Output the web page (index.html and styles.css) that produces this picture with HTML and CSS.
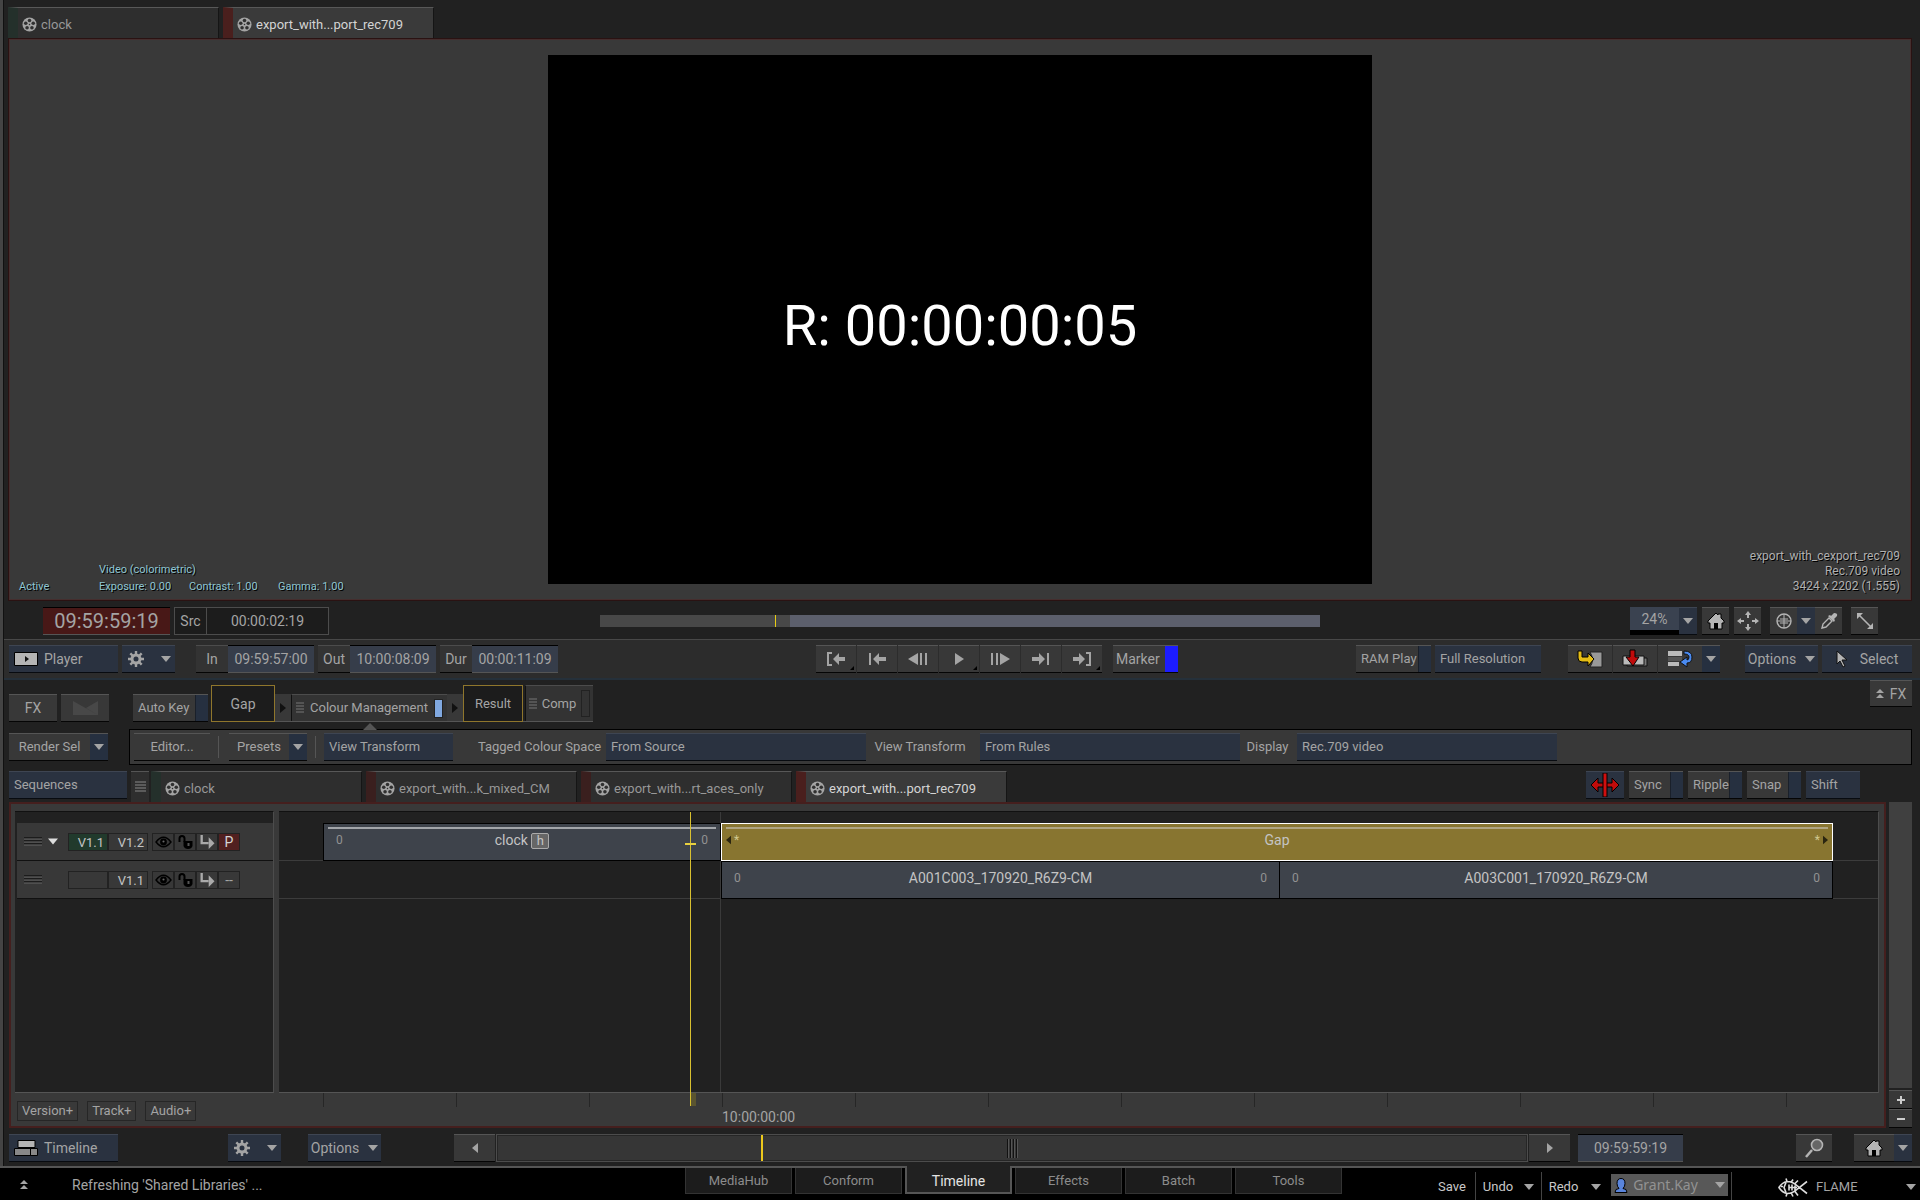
FILE: index.html
```
<!DOCTYPE html>
<html lang="en">
<head>
    <meta charset="UTF-8">
    <title>Flame - Timeline</title>
    <link rel="stylesheet" href="styles.css">
</head>
<body>
<svg class="defs" width="0" height="0" aria-hidden="true">
    <symbol id="reel" viewBox="0 0 16 16">
        <circle cx="8" cy="8" r="7.500" fill="currentColor"/>
        <g fill="#303030">
            <circle cx="8" cy="3.700" r="1.900"/><circle cx="12" cy="6.600" r="1.900"/><circle cx="10.600" cy="11.400" r="1.900"/>
            <circle cx="5.400" cy="11.400" r="1.900"/><circle cx="4" cy="6.600" r="1.900"/><circle cx="8" cy="8" r=".8"/>
        </g>
    </symbol>
    <symbol id="down" viewBox="0 0 10 6"><path d="M0 0h10L5 6z" fill="currentColor"/></symbol>
    <symbol id="right" viewBox="0 0 6 10"><path d="M0 0v10l6-5z" fill="currentColor"/></symbol>
    <symbol id="left" viewBox="0 0 6 10"><path d="M6 0v10L0 5z" fill="currentColor"/></symbol>
    <symbol id="up2" viewBox="0 0 8 10"><path d="M4 0l4 4H0zM4 5l4 4H0z" fill="currentColor"/></symbol>
    <symbol id="gear" viewBox="0 0 18 18">
        <circle cx="9" cy="9" r="4" fill="none" stroke="currentColor" stroke-width="3"/>
        <path d="M9 1v3M9 14v3M1 9h3M14 9h3M3.3 3.3l2.2 2.2M12.5 12.5l2.2 2.2M3.3 14.7l2.2-2.2M12.5 5.5l2.2-2.2" stroke="currentColor" stroke-width="2.4"/>
    </symbol>
    <symbol id="house" viewBox="0 0 18 18">
        <path d="M9 1L1 9v2h2v6h12v-6h2V9l-3-3V2h-3v1z" fill="#b4b4b4" stroke="#000"/>
        <path d="M7 17v-6h4v6z" fill="#000"/>
    </symbol>
    <symbol id="eye" viewBox="0 0 16 12">
        <path d="M1 6q7-9 14 0q-7 9-14 0z" fill="none" stroke="#000" stroke-width="1.4"/>
        <circle cx="8" cy="6" r="3.2" fill="#000"/><circle cx="8" cy="5.5" r="1" fill="#666"/>
    </symbol>
    <symbol id="lock" viewBox="0 0 16 14">
        <path d="M2 7V3.500q0-2.500 2.500-2.500T7 3.500V7" fill="none" stroke="#000" stroke-width="2"/>
        <path d="M6 6h9v5q-1 3-4.500 3T6 11z" fill="#000"/><path d="M10 8h2v3h-2z" fill="#555"/>
    </symbol>
    <symbol id="turn" viewBox="0 0 14 12">
        <path d="M2 0v7h6" fill="none" stroke="#aaa" stroke-width="2"/><path d="M8 2v10l5-5z" fill="#aaa"/>
    </symbol>
    <symbol id="grip" viewBox="0 0 18 10">
        <path d="M0 1h18M0 4h18M0 7h18" stroke="#000"/><path d="M0 2h18M0 5h18M0 8h18" stroke="#666"/>
    </symbol>
</svg>

<main class="work">
    <nav class="tabs viewer-tabs">
        <button class="tab green"><svg class="reel"><use href="#reel"/></svg>clock</button>
        <button class="tab red active"><svg class="reel"><use href="#reel"/></svg>export_with...port_rec709</button>
    </nav>

    <section class="viewer">
        <div class="frame">R: 00:00:00:05</div>
        <div class="overlay info">
            <span class="state">Active</span>
            <span class="mode">Video (colorimetric)</span>
            <span class="exposure">Exposure: 0.00</span>
            <span class="contrast">Contrast: 1.00</span>
            <span class="gamma">Gamma: 1.00</span>
        </div>
        <div class="overlay meta">export_with_cexport_rec709<br>Rec.709 video<br>3424 x 2202 (1.555)</div>
    </section>

    <div class="scrub">
        <input class="timecode" aria-label="Current time" value="09:59:59:19">
        <label class="src" for="src">Src</label>
        <input class="src-time" id="src" value="00:00:02:19">
        <div class="scrub-bar"><i class="scrub-cache"></i><i class="scrub-mark"></i></div>
        <div class="view-tools">
            <div class="zoom"><input aria-label="Zoom" value="24%"></div>
            <button class="drop" aria-label="Zoom list"><svg><use href="#down"/></svg></button>
            <button class="btn tool" aria-label="Home"><svg class="i18"><use href="#house"/></svg></button>
            <button class="btn tool" aria-label="Pan">
                <svg class="i20" viewBox="0 0 22 20"><path d="M11 0l3 4h-2v3h-2V4H8zM11 20l3-4h-2v-3h-2v3H8zM0 10l4-3v2h3v2H4v2zM22 10l-4-3v2h-3v2h3v2z" fill="#b4b4b4"/></svg>
            </button>
            <button class="btn tool grid-btn" aria-label="Grid">
                <svg class="i18" viewBox="0 0 18 18"><circle cx="9" cy="9" r="7" fill="none" stroke="#b4b4b4" stroke-width="1.4"/><path d="M9 2v14M2 9h14M5 7h8M5 11h8" stroke="#b4b4b4"/></svg>
            </button>
            <button class="drop" aria-label="Grid list"><svg><use href="#down"/></svg></button>
            <button class="btn tool pick" aria-label="Colour picker">
                <svg class="i18" viewBox="0 0 18 18"><path d="M2 16l1-4 6-6 3 3-6 6z" fill="#333" stroke="#b4b4b4" stroke-width="1.4"/><path d="M8 4l6 6 1-2-1-1 3-3q1-3-3-3l-3 3-1-1z" fill="#b4b4b4"/></svg>
            </button>
            <button class="btn tool full" aria-label="Full screen">
                <svg class="i18" viewBox="0 0 18 18"><path d="M3 3l12 12" stroke="#b4b4b4" stroke-width="1.6"/><path d="M1 1h6L1 7zM17 17h-6l6-6z" fill="#b4b4b4"/></svg>
            </button>
        </div>
    </div>

    <div class="player">
        <button class="blue mode-btn">
            <svg class="mode-icon" viewBox="0 0 24 14"><path d="M.5.5h23v13H.5z" fill="#b4b4b4" stroke="#000"/><path d="M11 4v6l4-3z" fill="#111"/></svg>Player
        </button>
        <button class="blue gear-btn" aria-label="Player settings"><svg class="i18"><use href="#gear"/></svg><svg class="arrow"><use href="#down"/></svg></button>
        <div class="field in"><label for="in">In</label><input id="in" value="09:59:57:00"></div>
        <div class="field"><label for="out">Out</label><input id="out" value="10:00:08:09"></div>
        <div class="field"><label for="dur">Dur</label><input id="dur" value="00:00:11:09"></div>
        <div class="transport">
            <button class="more" aria-label="To in"><svg viewBox="0 0 20 14"><path d="M6 1H2v12h4" fill="none" stroke="currentColor" stroke-width="2"/><path d="M7 7l6-6v4h6v4h-6v4z" fill="currentColor"/></svg></button>
            <button aria-label="Previous edit"><svg viewBox="0 0 20 14"><path d="M2 1h2v12H2zM6 7l6-6v4h7v4h-7v4z" fill="currentColor"/></svg></button>
            <button aria-label="Step back"><svg viewBox="0 0 20 14"><path d="M10 1v12L0 7zM12 1h2v12h-2zM17 1h2v12h-2z" fill="currentColor"/></svg></button>
            <button class="more" aria-label="Play"><svg viewBox="0 0 20 14"><path d="M6 1v12l9-6z" fill="currentColor"/></svg></button>
            <button aria-label="Step forward"><svg viewBox="0 0 20 14"><path d="M10 1v12l10-6zM6 1h2v12H6zM1 1h2v12H1z" fill="currentColor"/></svg></button>
            <button aria-label="Next edit"><svg viewBox="0 0 20 14"><path d="M16 1h2v12h-2zM14 7L8 1v4H1v4h7v4z" fill="currentColor"/></svg></button>
            <button class="more" aria-label="To out"><svg viewBox="0 0 20 14"><path d="M14 1h4v12h-4" fill="none" stroke="currentColor" stroke-width="2"/><path d="M13 7L7 1v4H1v4h6v4z" fill="currentColor"/></svg></button>
        </div>
        <button class="marker">Marker<i></i></button>
        <div class="player-right">
            <label class="toggle ram">RAM Play<input type="checkbox"></label>
            <select class="blue res" aria-label="Resolution"><option>Full Resolution</option></select>
            <div class="edit-tools">
                <button aria-label="Insert"><svg viewBox="0 0 26 18"><path d="M13 2h12v15H13q5-7 0-15z" fill="#999" stroke="#222"/><path d="M1 1h4v6h6V3l6 6-6 7v-4H5q-4 0-4-4z" fill="#e5bd15" stroke="#000"/></svg></button>
                <button aria-label="Overwrite"><svg viewBox="0 0 26 18"><path d="M5 8h20v8H5z" fill="#777" stroke="#111"/><path d="M1 6h21v9H1z" fill="#bbb" stroke="#111"/><path d="M8 0h5v7h4l-6 9-7-9h4z" fill="#c00b0b" stroke="#000"/></svg></button>
                <button aria-label="Replace"><svg viewBox="0 0 26 18"><path d="M1 1h14v5H1z" fill="#bbb"/><path d="M1 7h14v4H1z" fill="#555"/><path d="M1 12h11v4H1z" fill="#bbb"/><path d="M17 1q8 0 8 6t-5 6v4l-7-5 7-5v3q2 0 2-3t-5-3z" fill="#4a8af0" stroke="#111"/></svg></button>
                <button class="drop" aria-label="Edit list"><svg><use href="#down"/></svg></button>
            </div>
            <button class="blue options">Options<svg class="arrow"><use href="#down"/></svg></button>
            <button class="blue select"><svg class="i18" viewBox="0 0 14 18"><path d="M3 1v13l3-3 3 6 2-1-3-6h5z" fill="#b4b4b4" stroke="#111"/></svg>Select</button>
        </div>
    </div>

    <div class="fx-row">
        <button class="btn fx">FX</button>
        <button class="btn fx" aria-label="Transition"><svg class="trans" viewBox="0 0 25 14"><path d="M0 0l25 14H0zM25 0v14L13 7z" fill="#484848"/></svg></button>
        <label class="toggle auto">Auto Key<input type="checkbox"></label>
        <div class="pipeline">
            <button class="node gap-node">Gap</button>
            <span class="link"><svg><use href="#right"/></svg></span>
            <button class="stage cm"><svg class="lines" viewBox="0 0 8 12"><path d="M0 1h8M0 4h8M0 7h8M0 10h8" stroke="#777"/></svg>Colour Management<i class="on"></i></button>
            <span class="link"><svg><use href="#right"/></svg></span>
            <button class="node result-node">Result</button>
            <button class="stage comp"><svg class="lines" viewBox="0 0 8 12"><path d="M0 1h8M0 4h8M0 7h8M0 10h8" stroke="#777"/></svg>Comp<i></i></button>
        </div>
        <button class="btn fx-toggle"><svg><use href="#up2"/></svg>FX</button>
    </div>

    <div class="params-row">
        <button class="split render"><span>Render Sel</span><i><svg><use href="#down"/></svg></i></button>
        <div class="params">
            <button class="btn editor">Editor...</button>
            <hr>
            <button class="split presets"><span>Presets</span><i><svg><use href="#down"/></svg></i></button>
            <hr>
            <select class="blue transform" aria-label="Mode"><option>View Transform</option></select>
            <label class="tagged" for="tagged">Tagged Colour Space</label>
            <select class="blue wide" id="tagged"><option>From Source</option></select>
            <label class="vt" for="vt">View Transform</label>
            <select class="blue wide" id="vt"><option>From Rules</option></select>
            <label class="display" for="display">Display</label>
            <select class="blue wide" id="display"><option>Rec.709 video</option></select>
        </div>
    </div>

    <div class="seq-row">
        <select class="blue sequences" aria-label="List"><option>Sequences</option></select>
        <span class="handle"><svg viewBox="0 0 11 12"><path d="M0 1h11M0 4h11M0 7h11M0 10h11" stroke="#888"/></svg></span>
        <nav class="tabs">
            <button class="tab green"><svg class="reel"><use href="#reel"/></svg>clock</button>
            <button class="tab red"><svg class="reel"><use href="#reel"/></svg>export_with...k_mixed_CM</button>
            <button class="tab red"><svg class="reel"><use href="#reel"/></svg>export_with...rt_aces_only</button>
            <button class="tab red active"><svg class="reel"><use href="#reel"/></svg>export_with...port_rec709</button>
        </nav>
        <div class="seq-tools">
            <button class="blue trim" aria-label="Trim"><svg viewBox="0 0 30 24"><path d="M1 12l7-7v5h14V5l7 7-7 7v-5H8v5z" fill="#c00b0b" stroke="#000"/><path d="M13 0h4v24h-4z" fill="#d00f0f" stroke="#000"/></svg></button>
            <label class="toggle">Sync<input type="checkbox"></label>
            <label class="toggle">Ripple<input type="checkbox"></label>
            <label class="toggle">Snap<input type="checkbox"></label>
            <button class="blue shift">Shift</button>
        </div>
    </div>

    <section class="timeline">
        <div class="panel">
            <div class="heads">
                <div class="head">
                    <svg class="grip"><use href="#grip"/></svg>
                    <svg class="fold"><use href="#down"/></svg>
                    <span class="name green">V1.1</span><span class="name">V1.2</span>
                    <button class="first" aria-label="Show"><svg><use href="#eye"/></svg></button>
                    <button aria-label="Lock"><svg><use href="#lock"/></svg></button>
                    <button aria-label="Patch"><svg><use href="#turn"/></svg></button>
                    <button class="primary">P</button>
                </div>
                <div class="head">
                    <svg class="grip"><use href="#grip"/></svg>
                    <span class="fold"></span>
                    <span class="name"></span><span class="name">V1.1</span>
                    <button class="first" aria-label="Show"><svg><use href="#eye"/></svg></button>
                    <button aria-label="Lock"><svg><use href="#lock"/></svg></button>
                    <button aria-label="Patch"><svg><use href="#turn"/></svg></button>
                    <button>--</button>
                </div>
            </div>
            <div class="tracks">
                <i class="hour"></i>
                <div class="track">
                    <div class="clip clip-clock barred"><small>0</small><span>clock <kbd>h</kbd></span><small>0</small></div>
                    <div class="clip clip-gap barred"><small><svg><use href="#left"/></svg>*</small><span>Gap</span><small>*<svg><use href="#right"/></svg></small></div>
                </div>
                <div class="track">
                    <div class="clip clip-a"><small>0</small><span>A001C003_170920_R6Z9-CM</span><small>0</small></div>
                    <div class="clip clip-b"><small>0</small><span>A003C001_170920_R6Z9-CM</span><small>0</small></div>
                </div>
                <i class="playhead"></i>
            </div>
            <div class="add">
                <button>Version+</button><button>Track+</button><button>Audio+</button>
            </div>
            <div class="ruler">
                <i></i><i></i><i></i><i></i><i></i><i></i><i></i><i></i><i></i><i></i><i></i><i></i>
                <span>10:00:00:00</span>
            </div>
        </div>
        <div class="vscroll">
            <div class="vbar"></div>
            <button aria-label="Taller tracks"><svg viewBox="0 0 10 10"><path d="M1 5h8M5 1v8" stroke="#ccc" stroke-width="2"/></svg></button>
            <button aria-label="Shorter tracks"><svg viewBox="0 0 10 10"><path d="M1 5h8" stroke="#ccc" stroke-width="2"/></svg></button>
        </div>
    </section>

    <div class="nav-row">
        <button class="blue mode-btn">
            <svg class="mode-icon" viewBox="0 0 24 16"><path d="M4 .5h17v7H4z" fill="#b4b4b4" stroke="#000"/><path d="M.5 8.500h16v7H.5zM16.500 8.500h7v7h-7z" fill="#888" stroke="#000"/></svg>Timeline
        </button>
        <button class="blue gear-btn" aria-label="Timeline settings"><svg class="i18"><use href="#gear"/></svg><svg class="arrow"><use href="#down"/></svg></button>
        <button class="blue options">Options<svg class="arrow"><use href="#down"/></svg></button>
        <div class="hscroll">
            <button class="btn" aria-label="Scroll left"><svg><use href="#left"/></svg></button>
            <div class="hbar"><i class="hmark"></i><i class="hgrip"></i></div>
            <button class="btn" aria-label="Scroll right"><svg><use href="#right"/></svg></button>
        </div>
        <input class="nav-time" aria-label="Position" value="09:59:59:19">
        <button class="btn mag" aria-label="Zoom"><svg class="i20" viewBox="0 0 20 20"><path d="M8 12l-6 7" stroke="#b4b4b4" stroke-width="2.500"/><circle cx="13" cy="7" r="5.500" fill="#666" stroke="#b4b4b4" stroke-width="1.600"/></svg></button>
        <button class="btn nav-home" aria-label="Home"><svg class="i18"><use href="#house"/></svg></button>
        <button class="drop" aria-label="Home list"><svg><use href="#down"/></svg></button>
    </div>
</main>

<footer class="bar">
    <button class="expand" aria-label="Expand"><svg><use href="#up2"/></svg></button>
    <span class="status">Refreshing 'Shared Libraries' ...</span>
    <nav class="modules">
        <button>MediaHub</button>
        <button>Conform</button>
        <button class="active">Timeline</button>
        <button>Effects</button>
        <button>Batch</button>
        <button>Tools</button>
    </nav>
    <div class="session">
        <button class="save">Save</button>
        <button class="undo">Undo<svg><use href="#down"/></svg></button>
        <button class="redo">Redo<svg><use href="#down"/></svg></button>
        <button class="user"><svg class="person" viewBox="0 0 14 16"><path d="M1 15q0-4 4-4-2-2-2-5 0-5 4-5t4 5q0 3-2 5 4 0 4 4z" fill="#5a85dc" stroke="#000"/></svg>Grant.Kay<svg><use href="#down"/></svg></button>
        <button class="flame">
            <svg class="fish" viewBox="0 0 30 18" fill="none" stroke="#ddd" stroke-width="1.600"><path d="M29 3L20 10q-5 5-11 5-5-1-8-6 3-5 8-6 6 0 11 5l9 7M8 4l-2 5 2 5M11 6v6M14 6v6M17 7v5M11 9h8M9 3L8 0M13 4l2-3M17 5l3-3M9 15l-1 3M13 14l2 4M17 13l3 4M3 8h2"/></svg>
            FLAME<svg><use href="#down"/></svg>
        </button>
    </div>
</footer>
</body>
</html>
```
FILE: styles.css
```
* {
    box-sizing: border-box;
}

body {
    margin: 0;
    min-height: 100vh;
    display: flex;
    flex-direction: column;
    background: #212121;
    color: #a4a4a4;
    font: 14px/20px "Roboto", "Liberation Sans", sans-serif;
}

button, input, select {
    margin: 0;
    padding: 0;
    border: 0;
    border-radius: 0;
    background: none;
    color: inherit;
    font: inherit;
    outline: none;
    appearance: none;
    flex: none;
}

button, label {
    display: flex;
    align-items: center;
    justify-content: center;
    white-space: nowrap;
    cursor: pointer;
}

svg {
    flex: none;
    width: 10px;
    height: 6px;
}

.defs {
    position: absolute;
}

.i18 {
    width: 18px;
    height: 18px;
}

.i20 {
    width: 22px;
    height: 20px;
}

.work {
    flex: 1;
    display: flex;
    flex-direction: column;
    padding: 7px 8px 4px;
    background: linear-gradient(90deg, #444 3px, #111 3px, #111 4px, transparent 4px);
}

/* buttons */

.btn, .toggle, .split, .marker, .transport button, .edit-tools button, .vscroll button {
    height: 28px;
    background: #383838;
    border-top: 1px solid #555;
    border-bottom: 1px solid #050505;
}

.blue, .drop {
    height: 28px;
    background: #2a3240;
    border-top: 1px solid #3e4552;
    border-bottom: 1px solid #080b10;
    padding: 0;
}

select.blue {
    padding: 0 5px;
}

.drop {
    width: 18px;
}

.toggle {
    justify-content: space-between;
    padding-left: 5px;
}

.toggle input {
    width: 13px;
    height: 100%;
    background: #263040;
    border-left: 1px solid #1a202a;
}

.split span {
    flex: 1;
    text-align: center;
}

.split i {
    width: 18px;
    height: 100%;
    display: flex;
    align-items: center;
    justify-content: center;
    background: #263040;
}

.options {
    width: 73px;
    gap: 9px;
}

.gear-btn {
    width: 53px;
    gap: 16px;
}

.mode-btn {
    width: 109px;
    justify-content: flex-start;
    padding-left: 5px;
    gap: 6px;
}

.mode-icon {
    width: 24px;
    height: 16px;
}

/* tabs */

.tabs {
    display: flex;
    gap: 4px;
}

.tab {
    width: 211px;
    height: 31px;
    justify-content: flex-start;
    gap: 4px;
    padding: 3px 0 0 4px;
    background: #2e2e2e;
    border-top: 1px solid #585858;
    border-left: 10px solid #24302b;
    border-right: 1px solid #151515;
    color: #989898;
    font-size: 13px;
}

.tab.red {
    border-left-color: #3a1f1e;
}

.tab.active {
    background: #3a3a3a;
    border-left-color: #4a1f1d;
    color: #d4d4d4;
}

.reel {
    width: 15px;
    height: 15px;
    color: #a4a4a4;
}

/* viewer */

.viewer {
    flex: 528 1 0;
    position: relative;
    display: flex;
    justify-content: center;
    padding: 16px;
    background: #393939;
    border: 1px solid #2a1212;
    box-shadow: inset 0 0 0 1px #452e2e;
}

.frame {
    aspect-ratio: 822 / 528;
    display: flex;
    align-items: center;
    justify-content: center;
    background: #000;
    color: #fff;
    font-size: 56px;
    line-height: 60px;
    padding-top: 12px;
}

.overlay {
    position: absolute;
    bottom: 6px;
    font-size: 12px;
    line-height: 15px;
    text-shadow: 1px 1px 0 #000;
}

.info {
    left: 10px;
    display: grid;
    grid-template-columns: 80px 90px 89px auto;
    row-gap: 2px;
    color: #8fc6d2;
    font-size: 11px;
}

.state {
    grid-row: 2;
}

.mode {
    grid-column: 2 / span 3;
}

.meta {
    right: 11px;
    text-align: right;
    color: #b0b0b0;
}

/* scrub row */

.scrub {
    display: flex;
    align-items: center;
    height: 38px;
    padding: 2px 34px 0 35px;
}

.timecode {
    width: 127px;
    height: 28px;
    background: #481817;
    border-top: 1px solid #000;
    border-bottom: 1px solid #555;
    text-align: center;
    font-size: 20px;
}

.src, .src-time {
    height: 28px;
    border: 1px solid #4c4c4c;
    background: #1c1c1c;
}

.src {
    width: 33px;
    margin-left: 4px;
}

.src-time {
    width: 122px;
    border-left: 0;
    text-align: center;
}

.scrub-bar {
    position: relative;
    display: flex;
    justify-content: flex-end;
    width: 720px;
    height: 12px;
    margin-left: 271px;
    background: #484848;
}

.scrub-cache {
    width: 73.6%;
    background: #5c5f6c;
}

.scrub-mark {
    position: absolute;
    left: 24.3%;
    width: 1px;
    height: 12px;
    background: #e8cc14;
}

.view-tools {
    display: flex;
    margin-left: auto;
}

.zoom {
    width: 49px;
    height: 28px;
    border-bottom: 5px solid #000;
    background: #3a4250;
}

.zoom input {
    width: 100%;
    height: 23px;
    text-align: center;
}

.tool {
    width: 27px;
    margin-left: 5px;
}

.tool.grid-btn {
    margin-left: 9px;
}

.tool.pick {
    margin-left: 0;
}

.tool.full {
    margin-left: 9px;
}

/* player row */

.player {
    display: flex;
    align-items: center;
    height: 41px;
    margin: 0 -8px 0 -4px;
    padding: 0 8px 0 5px;
    background: #2c2c2c;
    border-top: 1px solid #484848;
    border-bottom: 2px solid #25303a;
}

.player .gear-btn {
    margin-left: 4px;
}

.field {
    display: flex;
    margin-left: 4px;
}

.field.in {
    margin-left: 21px;
}

.field label {
    width: 32px;
    height: 28px;
    background: #333;
    border-top: 1px solid #4c4c4c;
    border-bottom: 1px solid #050505;
}

.field input, .nav-time {
    width: 86px;
    height: 28px;
    background: #363d4a;
    border-top: 1px solid #000;
    border-bottom: 1px solid #555;
    text-align: center;
}

.transport {
    display: flex;
    gap: 1px;
    margin-left: 258px;
}

.transport button {
    width: 40px;
    position: relative;
}

.transport svg {
    width: 20px;
    height: 14px;
}

.transport .more::after {
    content: "";
    position: absolute;
    right: 2px;
    bottom: 2px;
    border: 2px solid #000;
    border-top-color: transparent;
    border-left-color: transparent;
}

.marker {
    width: 65px;
    margin-left: 11px;
    justify-content: space-between;
    padding-left: 3px;
}

.marker i {
    width: 13px;
    height: 100%;
    background: #1c1cff;
}

.player-right {
    display: flex;
    margin-left: auto;
}

.ram, .auto, .seq-tools, .render, .cm {
    font-size: 13px;
}

.ram {
    width: 75px;
}

.res {
    width: 106px;
    margin: 0 27px 0 4px;
    font-size: 13px;
}

.edit-tools {
    display: flex;
    gap: 1px;
    margin-right: 25px;
}

.edit-tools button {
    width: 44px;
}

.edit-tools button svg {
    width: 26px;
    height: 20px;
}

.edit-tools .drop {
    width: 18px;
    margin-left: -1px;
    background: #263040;
}

.edit-tools .drop svg {
    width: 10px;
    height: 6px;
}

.select {
    width: 90px;
    margin-left: 4px;
    padding-right: 4px;
    gap: 10px;
}

/* effects row */

.fx-row {
    display: flex;
    align-items: flex-end;
    height: 42px;
    padding-left: 1px;
}

.fx {
    width: 48px;
    margin-right: 4px;
}

.trans {
    width: 25px;
    height: 14px;
}

.auto {
    width: 75px;
    margin: 0 3px 0 20px;
}

.pipeline {
    display: flex;
    align-items: flex-end;
    border-bottom: 1px solid #555;
}

.node {
    height: 37px;
    margin-bottom: -1px;
    background: #1c1c1c;
    border: 1px solid #8f762c;
}

.gap-node {
    width: 64px;
}

.result-node {
    width: 60px;
    font-size: 13px;
}

.link {
    width: 16px;
    height: 27px;
    display: flex;
    align-items: center;
    justify-content: center;
    background: #383838;
    color: #111;
}

.link svg {
    width: 6px;
    height: 10px;
}

.stage {
    gap: 6px;
    background: #333;
    border-top: 1px solid #4c4c4c;
    border-left: 1px solid #111;
}

.lines {
    width: 8px;
    height: 12px;
}

.cm {
    width: 156px;
    height: 27px;
    position: relative;
}

/* points at the stage whose settings are open */
.cm::after {
    content: "";
    position: absolute;
    top: 28px;
    left: 71px;
    border: 7px solid transparent;
    border-top: 0;
    border-bottom-color: #555;
}

.comp {
    width: 68px;
    height: 36px;
    margin-left: 2px;
    gap: 5px;
    font-size: 13px;
}

.stage i {
    width: 9px;
    height: 27px;
    border: 1px solid #222;
}

.stage .on {
    height: 19px;
    background: #80a8e0;
}

.fx-toggle {
    align-self: flex-start;
    width: 42px;
    height: 27px;
    margin-left: auto;
    gap: 6px;
}

.fx-toggle svg, .expand svg {
    width: 8px;
    height: 10px;
}

/* parameters row */

.params-row {
    display: flex;
    align-items: center;
    height: 49px;
    padding: 0 0 0 1px;
}

.render {
    width: 99px;
}

.params {
    flex: 1;
    display: flex;
    align-items: center;
    height: 36px;
    margin-left: 21px;
    padding: 0 4px;
    background: #383838;
    border: 1px solid #000;
    font-size: 13px;
}

.params hr {
    width: 1px;
    height: 22px;
    margin: 0 8px;
    border: 0;
    background: #555;
}

.editor {
    width: 76px;
}

.presets {
    width: 78px;
    margin-left: 2px;
}

.transform {
    width: 129px;
}

.params .wide {
    width: 260px;
}

.tagged {
    width: 153px;
    padding-left: 20px;
}

.vt {
    width: 114px;
    padding-right: 6px;
}

.display {
    width: 57px;
    padding-right: 2px;
}

/* sequence row */

.seq-row {
    display: flex;
    height: 31px;
    padding-left: 1px;
}

.sequences {
    width: 118px;
    font-size: 13px;
}

.handle {
    display: flex;
    align-items: center;
    justify-content: center;
    width: 18px;
    margin: 0 2px 0 4px;
    background: #2e2e2e;
    border-top: 1px solid #555;
}

.handle svg {
    width: 11px;
    height: 12px;
}

.seq-tools {
    display: flex;
    gap: 5px;
    margin-left: auto;
    padding-right: 52px;
}

.seq-tools .toggle {
    width: 54px;
}

.trim {
    width: 38px;
}

.trim svg {
    width: 30px;
    height: 24px;
}

.shift {
    width: 54px;
    justify-content: flex-start;
    padding-left: 5px;
}

/* timeline */

.timeline {
    flex: 325 1 0;
    display: flex;
    gap: 3px;
    padding-left: 1px;
}

.panel {
    flex: 1;
    display: grid;
    grid-template-columns: 259px 1fr;
    grid-template-rows: 1fr 30px;
    column-gap: 5px;
    padding: 7px 5px 3px 4px;
    background: #393939;
    border: 2px solid #451f1e;
}

.heads, .tracks {
    padding-top: 11px;
    background: #212121;
    border-top: 1px solid #111;
    border-bottom: 1px solid #555;
    border-right: 1px solid #4c4c4c;
}

.heads {
    padding-left: 2px;
}

.head {
    display: flex;
    align-items: center;
    height: 38px;
    padding-left: 7px;
    background: #383838;
    border-bottom: 1px solid #111;
}

.grip {
    width: 18px;
    height: 10px;
}

.fold {
    width: 10px;
    height: 7px;
    margin: 0 10px 0 6px;
    color: #ddd;
}

.name {
    width: 40px;
    height: 18px;
    padding-right: 3px;
    border: 1px solid #222;
    text-align: right;
    font-size: 13px;
    line-height: 18px;
    color: #c4c4c4;
}

.name.green {
    background: #213a2c;
}

.head button {
    width: 22px;
    height: 18px;
    border: 1px solid #222;
}

.head .first {
    margin-left: 4px;
}

.head button svg {
    width: 17px;
    height: 14px;
}

.head .primary {
    background: #512020;
    color: #d4d4d4;
}

.tracks {
    position: relative;
}

.track {
    display: grid;
    grid-template-columns: 44fr 398fr 559fr 553fr 45fr;
    height: 38px;
    border-bottom: 1px solid #3c3c3c;
}

.clip {
    position: relative;
    display: flex;
    justify-content: space-between;
    padding: 6px 12px 0 12px;
    height: 38px;
    background: #3e434b;
    border: 1px solid #000;
    color: #c4c4c4;
}

.clip small {
    font-size: 12px;
    color: #929292;
}

.barred::before {
    content: "";
    position: absolute;
    left: 4px;
    right: 4px;
    top: 3px;
    height: 2px;
    background: #a2a5a9;
}

.clip-clock {
    grid-column: 2;
}

.clip-gap {
    grid-column: 3 / span 2;
    padding: 6px 4px 0;
    background: #887530;
    border-color: #fff;
}

.clip-gap::before {
    background: #b0a583;
}

.clip-gap small {
    display: flex;
    align-items: center;
    gap: 3px;
    height: 20px;
    color: #d0c890;
}

.clip-gap svg {
    width: 5px;
    height: 10px;
    color: #2a2510;
}

.clip-a {
    grid-column: 3;
}

.clip-b {
    grid-column: 4;
    border-left: 0;
}

kbd {
    display: inline-block;
    width: 18px;
    border: 1px solid #aaa;
    border-radius: 2px;
    background: #666;
    text-align: center;
    font: inherit;
    font-size: 13px;
    line-height: 14px;
}

.hour {
    position: absolute;
    left: 27.6%;
    top: 0;
    bottom: 0;
    width: 1px;
    background: #3a3a3a;
}

.playhead {
    position: absolute;
    left: 25.7%;
    top: 0;
    bottom: -14px;
    width: 1px;
    background: #d8c030;
}

.playhead::before {
    content: "";
    position: absolute;
    left: -5px;
    top: 31px;
    width: 11px;
    height: 2px;
    background: #e8d040;
}

.playhead::after {
    content: "";
    position: absolute;
    left: 1px;
    bottom: 0;
    width: 5px;
    height: 13px;
    background: #5a5430;
}

.add {
    display: flex;
    align-items: center;
    gap: 9px;
    padding: 5px 0 0 2px;
    font-size: 13px;
}

.add button {
    height: 20px;
    padding: 0 4px;
    border: 1px solid #262626;
}

.ruler {
    display: grid;
    grid-template-columns: 44fr repeat(11, 133fr) 93fr;
    grid-template-rows: 14px 20px;
}

.ruler i {
    border-left: 1px solid #262626;
}

.ruler i:first-child {
    grid-column: 2;
}

.ruler span {
    grid-area: 2 / 5 / 3 / 7;
}

.vscroll {
    display: flex;
    flex-direction: column;
    width: 23px;
}

.vbar {
    flex: 1;
    margin-bottom: 2px;
    background: #404040;
}

.vscroll button {
    height: 19px;
}

.vscroll svg {
    width: 10px;
    height: 10px;
}

/* navigation row */

.nav-row {
    display: flex;
    margin-top: 6px;
    padding-left: 1px;
}

.nav-row .gear-btn {
    margin: 0 27px 0 110px;
}

.hscroll {
    flex: 1;
    display: flex;
    margin: 0 8px 0 73px;
}

.hscroll .btn {
    width: 41px;
}

.hscroll svg {
    width: 6px;
    height: 10px;
}

.hbar {
    flex: 1;
    position: relative;
    display: flex;
    align-items: center;
    justify-content: center;
    margin: 0 1px;
    background: #363636;
    border: 1px solid #4c4c4c;
    box-shadow: inset 0 0 0 1px #262626;
}

.hmark {
    position: absolute;
    left: 25.6%;
    width: 2px;
    height: 26px;
    background: #ecc81c;
}

.hgrip {
    width: 11px;
    height: 19px;
    background: repeating-linear-gradient(90deg, #111 0, #111 1px, #555 1px, #555 2px, #363636 2px, #363636 3px);
}

.nav-time {
    width: 105px;
}

.mag {
    width: 36px;
    margin-left: 113px;
}

.nav-home {
    width: 40px;
    margin-left: 22px;
}

/* bottom bar */

.bar {
    display: flex;
    height: 34px;
    background: #000;
    border-top: 2px solid #555;
}

.expand {
    width: 48px;
    height: 34px;
}

.status {
    width: 613px;
    margin-left: 24px;
    line-height: 34px;
}

.modules {
    display: flex;
    gap: 3px;
    font-size: 13px;
}

.modules button {
    width: 107px;
    height: 26px;
    background: #1c1c1c;
    border: 1px solid #333;
    border-top: 0;
    color: #8c8c8c;
}

.modules .active {
    height: 28px;
    margin-top: -2px;
    padding-top: 4px;
    border: 2px solid #555;
    border-top: 0;
    background: #212121;
    color: #e4e4e4;
    font-size: 14px;
}

.session {
    display: flex;
    align-items: center;
    margin-left: auto;
    padding: 6px 4px 0 0;
    color: #c8c8c8;
    font-size: 13px;
}

.session button {
    height: 30px;
}

.session svg {
    color: #a4a4a4;
}

.session .save, .session .undo {
    border-right: 1px solid #444;
}

.save {
    width: 38px;
    justify-content: flex-start;
}

.undo {
    width: 66px;
    gap: 11px;
}

.redo {
    width: 66px;
    gap: 13px;
}

.session .user {
    width: 117px;
    height: 22px;
    align-self: flex-start;
    margin: 0 3px;
    gap: 5px;
    background: #585858;
    color: #929292;
    font: 14px/20px "Noto Sans", sans-serif;
}

.user svg:last-child {
    margin-left: 12px;
}

.session .person {
    width: 14px;
    height: 17px;
}

.session .flame {
    width: 185px;
    gap: 8px;
    justify-content: flex-start;
    padding-left: 46px;
    border-left: 1px solid #444;
    color: #a4a4a4;
}

.flame .fish {
    width: 30px;
    height: 19px;
}

.flame svg:last-child {
    margin-left: auto;
}
```
